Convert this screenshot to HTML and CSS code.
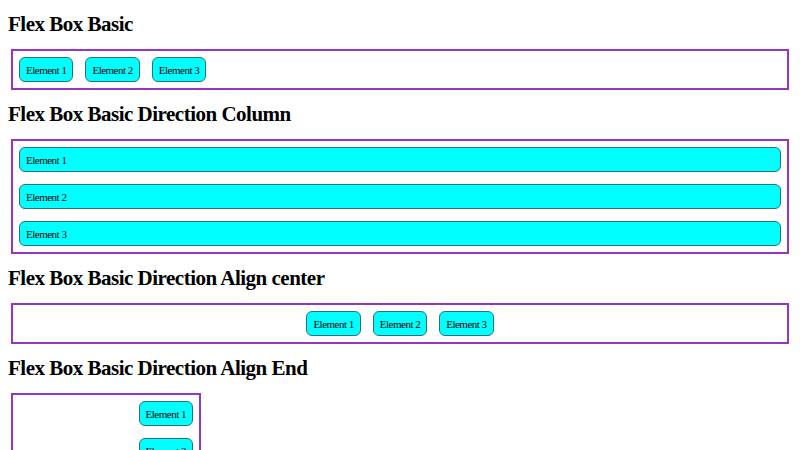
FILE: index.html
```html
<!DOCTYPE html>
<html lang="en">
<head>
    <meta charset="UTF-8">
    <meta name="viewport" content="width=device-width, initial-scale=1.0">
    <title>Flex Box</title>
    <link rel="stylesheet" href="styles.css">
</head>
<body>
    <h1>Flex Box Basic</h1>
    <div class="flex-container">
        <div class="element">Element 1</div>
        <div class="element">Element 2</div>
        <div class="element">Element 3</div>
    </div>

    <h1>Flex Box Basic Direction Column</h1>
    <div class="flex-container column">
        <div class="element">Element 1</div>
        <div class="element">Element 2</div>
        <div class="element">Element 3</div>
    </div>

    <h1>Flex Box Basic Direction Align center</h1>
    <div class="flex-container center">
        <div class="element">Element 1</div>
        <div class="element">Element 2</div>
        <div class="element">Element 3</div>
    </div>

    <h1>Flex Box Basic Direction Align End</h1>
    <div class="flex-container column align-end">
        <div class="element">Element 1</div>
        <div class="element">Element 2</div>
        <div class="element">Element 3</div>
    </div>
</body>
</html>
```

FILE: styles.css
```css
body {
    font-family: "Liberation Serif", "Times New Roman", serif;
    margin: 0 8px 8px;
    color: #000;
    background-color: #fff;
}
h1 {
    font-size: 21px;
    letter-spacing: -0.5px;
    margin: 12px 0;
}
.flex-container {
    display: flex;
    margin: 0 3px;
    border: 2px solid #9236c8;
}
.column {
    flex-direction: column;
}
.center {
    justify-content: center;
}
.align-end {
    width: 186px;
    align-items: flex-end;
}
.element {
    font-size: 11px;
    letter-spacing: -0.5px;
    background-color: cyan;
    border: 1px solid #2b7179;
    border-radius: 6px;
    padding: 5.5px 6px;
    margin: 6px;
}
```
